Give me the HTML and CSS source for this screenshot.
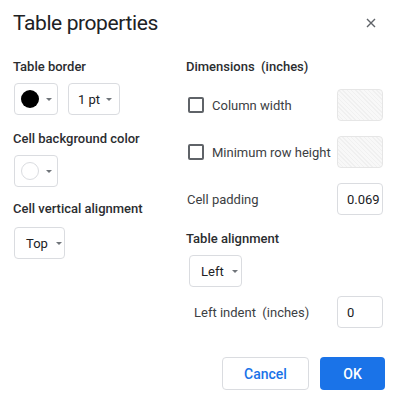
FILE: index.html
```html
<!DOCTYPE html>
<html>
<head>
<meta charset="utf-8">
<link rel="stylesheet" href="styles.css">
</head>
<body>
<div class="dialog">
  <div class="header">
    <div class="title">Table properties</div>
    <div class="close">
      <svg width="10" height="10" viewBox="0 0 10 10"><path d="M1 1L9 9M9 1L1 9" stroke="#5f6368" stroke-width="1.4" fill="none"/></svg>
    </div>
  </div>
  <div class="columns">
    <div class="col-left">
      <div class="label">Table border</div>
      <div class="btn-row">
        <div class="dd color-dd"><span class="swatch black"></span><span class="arrow"></span></div>
        <div class="dd text-dd pt">1 pt<span class="arrow"></span></div>
      </div>
      <div class="label l2">Cell background color</div>
      <div class="btn-row">
        <div class="dd color-dd"><span class="swatch white"></span><span class="arrow"></span></div>
      </div>
      <div class="label l3">Cell vertical alignment</div>
      <div class="btn-row r3">
        <div class="dd text-dd top">Top<span class="arrow"></span></div>
      </div>
    </div>
    <div class="col-right">
      <div class="label">Dimensions&nbsp; (inches)</div>
      <div class="row first">
        <div class="check-label"><span class="checkbox"></span>Column width</div>
        <div class="input disabled"></div>
      </div>
      <div class="row">
        <div class="check-label"><span class="checkbox"></span>Minimum row height</div>
        <div class="input disabled"></div>
      </div>
      <div class="row">
        <div class="text">Cell padding</div>
        <div class="input"><span class="clip">0.069</span></div>
      </div>
      <div class="label l4">Table alignment</div>
      <div class="dd text-dd left">Left<span class="arrow"></span></div>
      <div class="row indent">
        <div class="text">Left indent&nbsp; (inches)</div>
        <div class="input"><span class="clip">0</span></div>
      </div>
    </div>
  </div>
  <div class="footer">
    <div class="btn cancel">Cancel</div>
    <div class="btn ok">OK</div>
  </div>
</div>
</body>
</html>
```

FILE: styles.css
```css
html, body {
  margin: 0;
  padding: 0;
  background: #fff;
}
body {
  font-family: Roboto, "Liberation Sans", Arial, sans-serif;
  color: #202124;
  width: 397px;
  height: 401px;
  overflow: hidden;
}
.dialog {
  padding: 9px 14px 0 13px;
}
.header {
  display: flex;
  justify-content: space-between;
  align-items: center;
  height: 28px;
}
.title {
  font-size: 21px;
  line-height: 28px;
  color: #202124;
  letter-spacing: -0.4px;
}
.close {
  width: 24px;
  height: 24px;
  display: flex;
  align-items: center;
  justify-content: center;
  margin-top: -1px;
}
.columns {
  display: grid;
  grid-template-columns: 173px 1fr;
  margin-top: 22px;
}
.label {
  font-size: 13px;
  line-height: 16px;
  font-weight: 500;
  color: #2b2d30;
  white-space: nowrap;
}
.btn-row {
  display: flex;
  gap: 10px;
  margin-top: 8px;
  margin-left: 1px;
}
.l2 { margin-top: 16px; }
.l3 { margin-top: 14px; }
.r3 { margin-top: 10px; }
.dd {
  box-sizing: border-box;
  height: 32px;
  border: 1px solid #dadce0;
  border-radius: 4px;
  display: flex;
  align-items: center;
  font-size: 13px;
  color: #202124;
  white-space: nowrap;
  flex-shrink: 0;
}
.color-dd {
  width: 44px;
  padding-left: 6px;
}
.swatch {
  width: 18px;
  height: 18px;
  border-radius: 50%;
  box-sizing: border-box;
}
.swatch.black { background: #000; }
.swatch.white { background: #fff; border: 1px solid #dadce0; }
.arrow {
  width: 0;
  height: 0;
  border-left: 3.5px solid transparent;
  border-right: 3.5px solid transparent;
  border-top: 3.5px solid #70757a;
  margin-left: 7px;
}
.text-dd { padding: 0 6px 0 10px; }
.pt { width: 52px; padding-left: 9px; }
.pt .arrow { margin-left: 6px; }
.top { width: 51px; padding-left: 11px; }
.top .arrow { margin-left: 8px; }
.left {
  width: 53px;
  padding-left: 11px;
  margin-top: 8px;
  margin-left: 3px;
}
.left .arrow { margin-left: 8px; }
.row {
  display: flex;
  justify-content: space-between;
  align-items: center;
  margin-top: 15px;
}
.row.first { margin-top: 14px; }
.row.indent { margin-top: 9px; padding-left: 7px; }
.check-label {
  display: flex;
  align-items: center;
  font-size: 13px;
  color: #3c4043;
  padding-left: 2px;
  white-space: nowrap;
}
.checkbox {
  box-sizing: border-box;
  width: 16px;
  height: 16px;
  border: 2px solid #5f6368;
  border-radius: 2px;
  margin-right: 8px;
}
.text {
  font-size: 13px;
  color: #3c4043;
  padding-left: 1px;
  white-space: nowrap;
}
.input {
  box-sizing: border-box;
  width: 46px;
  height: 32px;
  border: 1px solid #dadce0;
  border-radius: 4px;
  display: flex;
  align-items: center;
  padding-left: 9px;
  overflow: hidden;
  font-size: 13px;
  color: #202124;
  white-space: nowrap;
}
.input.disabled {
  background-color: #f8f8f8;
  background-image: repeating-linear-gradient(45deg, #f0f0f0 0 1px, transparent 1px 3px);
  border-color: #e6e6e6;
}
.clip { display: block; }
.l4 { margin-top: 16px; }
.footer {
  display: flex;
  justify-content: flex-end;
  gap: 11px;
  margin-top: 29px;
  margin-right: -2px;
}
.btn {
  box-sizing: border-box;
  height: 33px;
  border-radius: 4px;
  display: flex;
  align-items: center;
  justify-content: center;
  font-size: 14px;
  font-weight: 500;
}
.cancel {
  width: 87px;
  border: 1px solid #dadce0;
  color: #1a73e8;
}
.ok {
  width: 65px;
  background: #1a73e8;
  color: #fff;
}
```
